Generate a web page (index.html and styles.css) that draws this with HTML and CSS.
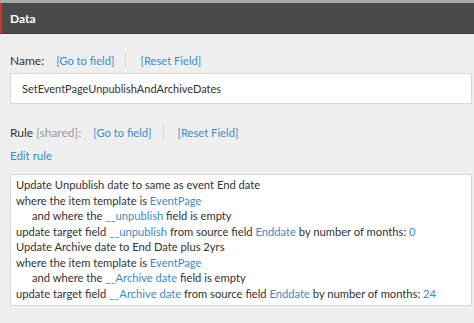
FILE: index.html
```html
<!DOCTYPE html>
<html>
<head>
<meta charset="utf-8">
<link rel="stylesheet" href="styles.css">
</head>
<body>
<div class="panel">
  <div class="header"><span class="title">Data</span></div>
  <div class="content">
    <div class="field-label">
      <span class="label">Name:</span>
      <a class="link">[Go to field]</a>
      <span class="sep"></span>
      <a class="link">[Reset Field]</a>
    </div>
    <div class="input">SetEventPageUnpublishAndArchiveDates</div>
    <div class="field-label rule-label">
      <span class="label">Rule <span class="shared">[shared]:</span></span>
      <a class="link">[Go to field]</a>
      <span class="sep"></span>
      <a class="link">[Reset Field]</a>
    </div>
    <a class="link edit">Edit rule</a>
    <div class="rules">
      <div>Update Unpublish date to same as event End date</div>
      <div>where the item template is <a class="link">EventPage</a></div>
      <div class="indent">and where the <a class="link">__unpublish</a> field is empty</div>
      <div>update target field <a class="link">__unpublish</a> from source field <a class="link">Enddate</a> by number of months: <a class="link">0</a></div>
      <div>Update Archive date to End Date plus 2yrs</div>
      <div>where the item template is <a class="link">EventPage</a></div>
      <div class="indent">and where the <a class="link">__Archive date</a> field is empty</div>
      <div>update target field <a class="link">__Archive date</a> from source field <a class="link">Enddate</a> by number of months: <a class="link">24</a></div>
    </div>
  </div>
</div>
</body>
</html>
```
FILE: styles.css
```css
html, body {
  margin: 0;
  padding: 0;
  background: #efefef;
}
body {
  font-family: Lato, "Open Sans", sans-serif;
  font-size: 12px;
  color: #333;
  width: 474px;
  height: 323px;
  overflow: hidden;
}
.panel {
  border-top: 3px solid #a9a9a9;
}
.header {
  height: 30px;
  background: #4a4a4a;
  border-left: 2px solid #c0392b;
  border-bottom: 1px solid #3c3c3c;
  display: flex;
  align-items: center;
  padding-left: 8px;
}
.title {
  color: #fff;
  font-weight: bold;
  font-size: 12px;
}
.content {
  padding: 0 2px 0 10px;
  display: flex;
  flex-direction: column;
  align-items: stretch;
}
.field-label {
  display: flex;
  align-items: center;
  height: 18px;
  margin-top: 17px;
}
.field-label .link {
  font-size: 11.2px;
}
.label {
  color: #333;
  margin-right: 12px;
}
.shared {
  color: #999;
}
.link {
  color: #3a8cc4;
  text-decoration: none;
}
.sep {
  width: 1px;
  height: 16px;
  background: #d8d8d8;
  margin: 0 14px 0 11px;
}
.input {
  margin-top: 4px;
  height: 29px;
  background: #fff;
  border: 1px solid #d9d9d9;
  display: flex;
  align-items: center;
  padding-left: 11px;
  font-size: 11px;
  color: #333;
}
.rule-label {
  margin-top: 19px;
}
.edit {
  margin-top: 6px;
  align-self: flex-start;
  line-height: 18px;
  font-size: 11.5px;
}
.rules {
  margin-top: 9px;
  background: #fff;
  border: 1px solid #d9d9d9;
  padding: 2px 5px 4px 5px;
  line-height: 15.5px;
  font-size: 11.2px;
}
.indent {
  padding-left: 16px;
}
```
